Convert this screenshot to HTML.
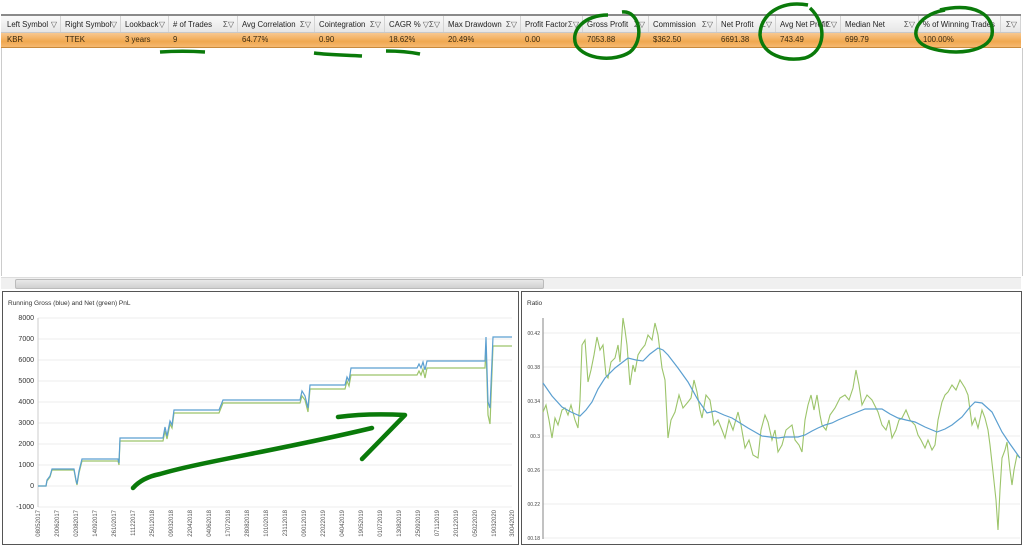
<!DOCTYPE html>
<html><head><meta charset="utf-8"><style>
body{margin:0;width:1024px;height:547px;background:#fff;font-family:"Liberation Sans",sans-serif;position:relative;overflow:hidden}
.hdr{position:absolute;left:1px;top:14px;width:1020px;height:18px;background:linear-gradient(#fafafa,#e6e6e6);border-top:2px solid #8a8a8a;border-bottom:1px solid #c8c8c8;box-sizing:border-box;height:19px}
.row{position:absolute;left:1px;top:33px;width:1020px;height:14px;background:linear-gradient(#f8c890,#f0a850 60%,#f5b970);border-bottom:1px solid #c98a3c}
.c{position:absolute;top:0;height:100%;font-size:7.8px;line-height:17px;padding-left:4px;box-sizing:border-box;color:#222;border-right:1px solid #d4d4d4;white-space:nowrap;overflow:hidden}
.row .c{line-height:14px;border-right:none;color:#3a2a10}
.ic{position:absolute;right:3px;top:0;font-size:8px;color:#555}
.grid{position:absolute;left:1px;top:48px;width:1020px;height:228px;border-left:1px solid #ccc;border-right:1px solid #ccc}
.sb{position:absolute;left:1px;top:277px;width:1020px;height:11px;background:#f0f0f0;border-top:1px solid #ddd}
.th{position:absolute;left:14px;top:1px;width:527px;height:8px;background:linear-gradient(#e8e8e8,#d0d0d0);border:1px solid #bbb;border-radius:2px}
.panel{position:absolute;top:291px;height:254px;border:1px solid #555;box-sizing:border-box}
</style></head><body>
<div class="hdr">
<div class="c" style="left:2px;width:58px">Left Symbol<span class="ic">▽</span></div>
<div class="c" style="left:60px;width:60px">Right Symbol<span class="ic">▽</span></div>
<div class="c" style="left:120px;width:48px">Lookback<span class="ic">▽</span></div>
<div class="c" style="left:168px;width:69px"># of Trades<span class="ic">Σ▽</span></div>
<div class="c" style="left:237px;width:77px">Avg Correlation<span class="ic">Σ▽</span></div>
<div class="c" style="left:314px;width:70px">Cointegration<span class="ic">Σ▽</span></div>
<div class="c" style="left:384px;width:59px">CAGR %<span class="ic">▽Σ▽</span></div>
<div class="c" style="left:443px;width:77px">Max Drawdown<span class="ic">Σ▽</span></div>
<div class="c" style="left:520px;width:62px">Profit Factor<span class="ic">Σ▽</span></div>
<div class="c" style="left:582px;width:66px">Gross Profit<span class="ic">Σ▽</span></div>
<div class="c" style="left:648px;width:68px">Commission<span class="ic">Σ▽</span></div>
<div class="c" style="left:716px;width:59px">Net Profit<span class="ic">Σ▽</span></div>
<div class="c" style="left:775px;width:65px">Avg Net Profit<span class="ic">Σ▽</span></div>
<div class="c" style="left:840px;width:78px">Median Net<span class="ic">Σ▽</span></div>
<div class="c" style="left:918px;width:82px">% of Winning Trades</div>
<div class="c" style="left:1000px;width:20px"><span class="ic">Σ▽</span></div>
</div>
<div class="row">
<div class="c" style="left:2px">KBR</div><div class="c" style="left:60px">TTEK</div><div class="c" style="left:120px">3 years</div><div class="c" style="left:168px">9</div><div class="c" style="left:237px">64.77%</div><div class="c" style="left:314px">0.90</div><div class="c" style="left:384px">18.62%</div><div class="c" style="left:443px">20.49%</div><div class="c" style="left:520px">0.00</div><div class="c" style="left:582px">7053.88</div><div class="c" style="left:648px">$362.50</div><div class="c" style="left:716px">6691.38</div><div class="c" style="left:775px">743.49</div><div class="c" style="left:840px">699.79</div><div class="c" style="left:918px">100.00%</div>
</div>
<div class="grid"></div>
<div class="sb"><div class="th"></div></div>
<div class="panel" style="left:2px;width:517px"></div>
<div class="panel" style="left:521px;width:501px"></div>
<svg width="1024" height="547" style="position:absolute;left:0;top:0" font-family="Liberation Sans, sans-serif">
<text x="8" y="305" font-size="6.5" fill="#333">Running Gross (blue) and Net (green) PnL</text>
<g stroke="#eee" stroke-width="1">
<line x1="38" x2="512" y1="318" y2="318"/><line x1="38" x2="512" y1="339" y2="339"/><line x1="38" x2="512" y1="360" y2="360"/><line x1="38" x2="512" y1="381" y2="381"/><line x1="38" x2="512" y1="402" y2="402"/><line x1="38" x2="512" y1="423" y2="423"/><line x1="38" x2="512" y1="444" y2="444"/><line x1="38" x2="512" y1="465" y2="465"/><line x1="38" x2="512" y1="486" y2="486"/><line x1="38" x2="512" y1="507" y2="507"/>
</g>
<line x1="38" x2="38" y1="318" y2="507" stroke="#ccc"/>
<g font-size="7" fill="#333" text-anchor="end">
<text x="34" y="320">8000</text><text x="34" y="341">7000</text><text x="34" y="362">6000</text><text x="34" y="383">5000</text><text x="34" y="404">4000</text><text x="34" y="425">3000</text><text x="34" y="446">2000</text><text x="34" y="467">1000</text><text x="34" y="488">0</text><text x="34" y="509">-1000</text>
</g>
<g font-size="6" fill="#555" text-anchor="end">
<text transform="translate(40,510) rotate(-90)">08052017</text><text transform="translate(59,510) rotate(-90)">20062017</text><text transform="translate(78,510) rotate(-90)">02082017</text><text transform="translate(97,510) rotate(-90)">14092017</text><text transform="translate(116,510) rotate(-90)">26102017</text><text transform="translate(135,510) rotate(-90)">11122017</text><text transform="translate(154,510) rotate(-90)">25012018</text><text transform="translate(173,510) rotate(-90)">09032018</text><text transform="translate(192,510) rotate(-90)">22042018</text><text transform="translate(211,510) rotate(-90)">04062018</text><text transform="translate(230,510) rotate(-90)">17072018</text><text transform="translate(249,510) rotate(-90)">28082018</text><text transform="translate(268,510) rotate(-90)">10102018</text><text transform="translate(287,510) rotate(-90)">23112018</text><text transform="translate(306,510) rotate(-90)">09012019</text><text transform="translate(325,510) rotate(-90)">22022019</text><text transform="translate(344,510) rotate(-90)">04042019</text><text transform="translate(363,510) rotate(-90)">19052019</text><text transform="translate(382,510) rotate(-90)">01072019</text><text transform="translate(401,510) rotate(-90)">13082019</text><text transform="translate(420,510) rotate(-90)">25092019</text><text transform="translate(439,510) rotate(-90)">07112019</text><text transform="translate(458,510) rotate(-90)">20122019</text><text transform="translate(477,510) rotate(-90)">05022020</text><text transform="translate(496,510) rotate(-90)">19032020</text><text transform="translate(514,510) rotate(-90)">30042020</text>
</g>
<polyline fill="none" stroke="#9cc46a" stroke-width="1.2" points="38,486 46,486 47,481 50,477 52,470 74,470 76,481 77,485 79,473 82,461 118,461 119,465 120,441 163,441 165,431 167,439 170,424 172,428 174,413 219,413 223,403 300,403 302,396 305,400 308,412 310,389 345,389 347,381 349,386 351,375 417,375 419,371 421,375 423,369 425,378 427,368 485,368 486,346 488,415 490,424 493,346 512,346"/>
<polyline fill="none" stroke="#5b9fd0" stroke-width="1.2" points="38,486 46,486 47,480 50,476 52,469 74,469 76,480 77,484 79,471 82,459 118,459 119,463 120,438 163,438 165,427 167,436 170,421 172,425 174,410 219,410 223,400 300,400 302,391 305,396 308,408 310,385 345,385 347,377 349,381 351,368 417,368 419,364 421,368 423,362 425,370 427,361 485,361 486,337 488,402 490,408 493,337 512,337"/>
<path d="M133,488 C140,480 150,476 160,474 C200,462 280,450 372,428" stroke="#0a7a0a" stroke-width="4.5" fill="none" stroke-linecap="round"/>
<path d="M338,417 C360,414 385,414 405,415 L362,459" stroke="#0a7a0a" stroke-width="4.5" fill="none" stroke-linecap="round" stroke-linejoin="round"/>
<text x="527" y="305" font-size="6.5" fill="#333">Ratio</text>
<g stroke="#eee"><line x1="543" x2="1020" y1="333" y2="333"/><line x1="543" x2="1020" y1="367" y2="367"/><line x1="543" x2="1020" y1="401" y2="401"/><line x1="543" x2="1020" y1="436" y2="436"/><line x1="543" x2="1020" y1="470" y2="470"/><line x1="543" x2="1020" y1="504" y2="504"/><line x1="543" x2="1020" y1="538" y2="538"/></g>
<line x1="543" x2="543" y1="318" y2="539" stroke="#999" stroke-width="1.2"/>
<g font-size="5" fill="#444" text-anchor="end"><text x="540" y="335">00.42</text><text x="540" y="369">00.38</text><text x="540" y="403">00.34</text><text x="540" y="438">00.3</text><text x="540" y="472">00.26</text><text x="540" y="506">00.22</text><text x="540" y="540">00.18</text></g>
<polyline fill="none" stroke="#9cc46a" stroke-width="1.1" points="543,412 546,405 549,420 552,438 555,418 558,425 562,410 565,408 568,415 571,405 575,420 578,428 580,400 582,345 585,340 588,382 591,370 594,355 597,337 600,350 603,345 606,375 608,378 611,362 615,358 618,345 620,362 623,318 625,330 627,345 630,385 633,365 635,372 638,355 641,350 645,345 648,335 652,340 655,323 658,335 662,368 665,380 668,438 671,420 675,412 679,395 683,408 688,402 691,398 694,380 697,392 700,410 702,418 706,395 710,400 714,425 718,420 722,430 725,438 729,420 733,430 738,412 741,425 745,448 749,440 753,455 758,458 761,430 765,415 768,422 772,440 775,430 778,452 782,445 786,430 792,425 795,440 799,445 802,452 805,420 808,405 811,395 814,410 817,395 820,415 822,425 826,430 830,415 835,408 840,398 845,395 849,400 853,388 856,370 859,385 862,405 867,395 872,400 878,412 882,425 886,430 889,420 892,438 896,430 899,420 902,418 906,410 910,420 915,425 918,435 921,440 925,448 928,440 932,450 935,445 938,420 942,402 945,395 948,392 952,385 956,390 960,380 965,388 968,395 972,425 975,418 978,428 982,410 985,418 988,430 990,445 993,472 996,500 998,530 1000,490 1002,458 1005,450 1007,442 1010,470 1012,485 1014,470 1017,455 1020,458"/>
<polyline fill="none" stroke="#5b9fd0" stroke-width="1.2" points="543,383 552,396 562,407 571,412 580,416 586,410 592,402 598,389 605,378 615,368 628,358 636,360 643,361 650,354 658,348 663,350 668,355 678,368 688,382 698,400 707,413 715,411 724,415 732,418 740,423 748,428 755,432 762,436 770,437 778,438 785,437 792,437 798,437 805,435 812,431 818,428 825,425 832,423 838,420 845,417 855,413 865,409 873,409 882,409 890,414 898,418 906,420 915,422 925,427 937,432 945,429 952,425 962,417 970,407 975,402 982,403 992,412 996,420 1002,432 1010,444 1020,458"/>
<path d="M160,52 C175,51 190,51 205,52" stroke="#0a7a0a" stroke-width="3.5" fill="none"/>
<path d="M314,53 C330,55 345,55 362,56" stroke="#0a7a0a" stroke-width="3.5" fill="none"/>
<path d="M386,51 C398,51 410,52 420,54" stroke="#0a7a0a" stroke-width="3.5" fill="none"/>
<path d="M622,12 C640,10 645,40 630,52 C615,62 585,60 576,45 C570,30 585,15 608,15" stroke="#0a7a0a" stroke-width="3.5" fill="none"/>
<path d="M808,5 C780,0 760,15 760,35 C762,55 785,62 805,58 C825,52 828,25 810,8" stroke="#0a7a0a" stroke-width="3.5" fill="none"/>
<path d="M940,10 C975,2 995,15 992,35 C988,52 955,56 930,48 C905,40 915,15 945,10" stroke="#0a7a0a" stroke-width="3.5" fill="none"/>
</svg>
</body></html>
